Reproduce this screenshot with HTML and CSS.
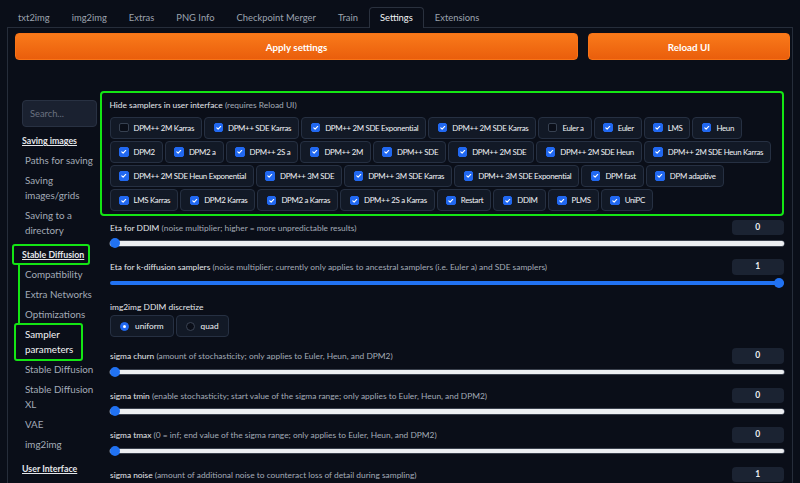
FILE: index.html
```html
<!DOCTYPE html>
<html>
<head>
<meta charset="utf-8">
<link rel="stylesheet" href="styles.css">
</head>
<body>
<div class="app">
  <nav class="tabs">
    <div class="tab">txt2img</div>
    <div class="tab">img2img</div>
    <div class="tab">Extras</div>
    <div class="tab">PNG Info</div>
    <div class="tab">Checkpoint Merger</div>
    <div class="tab">Train</div>
    <div class="tab active">Settings</div>
    <div class="tab">Extensions</div>
  </nav>
  <div class="panel">
    <div class="actions">
      <button class="btn apply">Apply settings</button>
      <button class="btn reload">Reload UI</button>
    </div>
    <div class="settings">
      <aside class="sidebar">
        <div class="search">Search...</div>
        <ul class="nav">
          <li class="head">Saving images</li>
          <li>Paths for saving</li>
          <li>Saving images/grids</li>
          <li>Saving to a directory</li>
          <li class="head">Stable Diffusion</li>
          <li>Compatibility</li>
          <li>Extra Networks</li>
          <li>Optimizations</li>
          <li class="current">Sampler parameters</li>
          <li>Stable Diffusion</li>
          <li>Stable Diffusion XL</li>
          <li>VAE</li>
          <li>img2img</li>
          <li class="head">User Interface</li>
        </ul>
        <div class="mark mark-sd"></div>
        <div class="mark-line"></div>
        <div class="mark mark-sp"></div>
      </aside>
      <main class="main">
        <section class="samplers">
          <div class="title"><span class="lbl">Hide samplers in user interface</span> <span class="info">(requires Reload UI)</span></div>
          <div class="chips">
            <label class="chip"><span class="cb"></span>DPM++ 2M Karras</label>
            <label class="chip"><span class="cb on"><svg viewBox="0 0 10 10"><path d="M2.4 5.1L4.2 6.9L7.6 3.3"/></svg></span>DPM++ SDE Karras</label>
            <label class="chip"><span class="cb on"><svg viewBox="0 0 10 10"><path d="M2.4 5.1L4.2 6.9L7.6 3.3"/></svg></span>DPM++ 2M SDE Exponential</label>
            <label class="chip"><span class="cb on"><svg viewBox="0 0 10 10"><path d="M2.4 5.1L4.2 6.9L7.6 3.3"/></svg></span>DPM++ 2M SDE Karras</label>
            <label class="chip"><span class="cb"></span>Euler a</label>
            <label class="chip"><span class="cb on"><svg viewBox="0 0 10 10"><path d="M2.4 5.1L4.2 6.9L7.6 3.3"/></svg></span>Euler</label>
            <label class="chip"><span class="cb on"><svg viewBox="0 0 10 10"><path d="M2.4 5.1L4.2 6.9L7.6 3.3"/></svg></span>LMS</label>
            <label class="chip"><span class="cb on"><svg viewBox="0 0 10 10"><path d="M2.4 5.1L4.2 6.9L7.6 3.3"/></svg></span>Heun</label>
            <label class="chip"><span class="cb on"><svg viewBox="0 0 10 10"><path d="M2.4 5.1L4.2 6.9L7.6 3.3"/></svg></span>DPM2</label>
            <label class="chip"><span class="cb on"><svg viewBox="0 0 10 10"><path d="M2.4 5.1L4.2 6.9L7.6 3.3"/></svg></span>DPM2 a</label>
            <label class="chip"><span class="cb on"><svg viewBox="0 0 10 10"><path d="M2.4 5.1L4.2 6.9L7.6 3.3"/></svg></span>DPM++ 2S a</label>
            <label class="chip"><span class="cb on"><svg viewBox="0 0 10 10"><path d="M2.4 5.1L4.2 6.9L7.6 3.3"/></svg></span>DPM++ 2M</label>
            <label class="chip"><span class="cb on"><svg viewBox="0 0 10 10"><path d="M2.4 5.1L4.2 6.9L7.6 3.3"/></svg></span>DPM++ SDE</label>
            <label class="chip"><span class="cb on"><svg viewBox="0 0 10 10"><path d="M2.4 5.1L4.2 6.9L7.6 3.3"/></svg></span>DPM++ 2M SDE</label>
            <label class="chip"><span class="cb on"><svg viewBox="0 0 10 10"><path d="M2.4 5.1L4.2 6.9L7.6 3.3"/></svg></span>DPM++ 2M SDE Heun</label>
            <label class="chip"><span class="cb on"><svg viewBox="0 0 10 10"><path d="M2.4 5.1L4.2 6.9L7.6 3.3"/></svg></span>DPM++ 2M SDE Heun Karras</label>
            <label class="chip"><span class="cb on"><svg viewBox="0 0 10 10"><path d="M2.4 5.1L4.2 6.9L7.6 3.3"/></svg></span>DPM++ 2M SDE Heun Exponential</label>
            <label class="chip"><span class="cb on"><svg viewBox="0 0 10 10"><path d="M2.4 5.1L4.2 6.9L7.6 3.3"/></svg></span>DPM++ 3M SDE</label>
            <label class="chip"><span class="cb on"><svg viewBox="0 0 10 10"><path d="M2.4 5.1L4.2 6.9L7.6 3.3"/></svg></span>DPM++ 3M SDE Karras</label>
            <label class="chip"><span class="cb on"><svg viewBox="0 0 10 10"><path d="M2.4 5.1L4.2 6.9L7.6 3.3"/></svg></span>DPM++ 3M SDE Exponential</label>
            <label class="chip"><span class="cb on"><svg viewBox="0 0 10 10"><path d="M2.4 5.1L4.2 6.9L7.6 3.3"/></svg></span>DPM fast</label>
            <label class="chip"><span class="cb on"><svg viewBox="0 0 10 10"><path d="M2.4 5.1L4.2 6.9L7.6 3.3"/></svg></span>DPM adaptive</label>
            <label class="chip"><span class="cb on"><svg viewBox="0 0 10 10"><path d="M2.4 5.1L4.2 6.9L7.6 3.3"/></svg></span>LMS Karras</label>
            <label class="chip"><span class="cb on"><svg viewBox="0 0 10 10"><path d="M2.4 5.1L4.2 6.9L7.6 3.3"/></svg></span>DPM2 Karras</label>
            <label class="chip"><span class="cb on"><svg viewBox="0 0 10 10"><path d="M2.4 5.1L4.2 6.9L7.6 3.3"/></svg></span>DPM2 a Karras</label>
            <label class="chip"><span class="cb on"><svg viewBox="0 0 10 10"><path d="M2.4 5.1L4.2 6.9L7.6 3.3"/></svg></span>DPM++ 2S a Karras</label>
            <label class="chip"><span class="cb on"><svg viewBox="0 0 10 10"><path d="M2.4 5.1L4.2 6.9L7.6 3.3"/></svg></span>Restart</label>
            <label class="chip"><span class="cb on"><svg viewBox="0 0 10 10"><path d="M2.4 5.1L4.2 6.9L7.6 3.3"/></svg></span>DDIM</label>
            <label class="chip"><span class="cb on"><svg viewBox="0 0 10 10"><path d="M2.4 5.1L4.2 6.9L7.6 3.3"/></svg></span>PLMS</label>
            <label class="chip"><span class="cb on"><svg viewBox="0 0 10 10"><path d="M2.4 5.1L4.2 6.9L7.6 3.3"/></svg></span>UniPC</label>
          </div>
        </section>

        <div class="srow">
          <div class="shead"><div class="slabel"><span class="lbl">Eta for DDIM</span> <span class="info">(noise multiplier; higher = more unpredictable results)</span></div><div class="num">0</div></div>
          <input class="range" type="range" min="0" max="1" step="0.01" value="0">
        </div>
        <div class="srow">
          <div class="shead"><div class="slabel"><span class="lbl">Eta for k-diffusion samplers</span> <span class="info">(noise multiplier; currently only applies to ancestral samplers (i.e. Euler a) and SDE samplers)</span></div><div class="num">1</div></div>
          <input class="range filled" type="range" min="0" max="1" step="0.01" value="1">
        </div>
        <div class="radio-block">
          <div class="slabel"><span class="lbl">img2img DDIM discretize</span></div>
          <div class="radios">
            <label class="chip"><span class="rd on"></span>uniform</label>
            <label class="chip"><span class="rd"></span>quad</label>
          </div>
        </div>
        <div class="srow">
          <div class="shead"><div class="slabel"><span class="lbl">sigma churn</span> <span class="info">(amount of stochasticity; only applies to Euler, Heun, and DPM2)</span></div><div class="num">0</div></div>
          <input class="range" type="range" min="0" max="100" step="0.01" value="0">
        </div>
        <div class="srow">
          <div class="shead"><div class="slabel"><span class="lbl">sigma tmin</span> <span class="info">(enable stochasticity; start value of the sigma range; only applies to Euler, Heun, and DPM2)</span></div><div class="num">0</div></div>
          <input class="range" type="range" min="0" max="10" step="0.01" value="0">
        </div>
        <div class="srow">
          <div class="shead"><div class="slabel"><span class="lbl">sigma tmax</span> <span class="info">(0 = inf; end value of the sigma range; only applies to Euler, Heun, and DPM2)</span></div><div class="num">0</div></div>
          <input class="range" type="range" min="0" max="999" step="0.01" value="0">
        </div>
        <div class="srow">
          <div class="shead"><div class="slabel"><span class="lbl">sigma noise</span> <span class="info">(amount of additional noise to counteract loss of detail during sampling)</span></div><div class="num">1</div></div>
        </div>
      </main>
    </div>
  </div>
</div>
</body>
</html>
```

FILE: styles.css
```css
html, body {
  margin: 0;
  padding: 0;
  height: 483px;
  overflow: hidden;
  background: #0a0e18;
}
body {
  font-family: Lato, "Noto Sans", sans-serif;
  color: #e5e7eb;
}
.app {
  padding: 0 7px;
}
.tabs {
  display: flex;
  margin-top: 7px;
  height: 20px;
  position: relative;
  z-index: 1;
}
.tab {
  padding: 0 10px;
  height: 20px;
  line-height: 20px;
  font-size: 9.4px;
  color: #9ca3af;
  border: 1px solid transparent;
  border-bottom: none;
  border-radius: 4px 4px 0 0;
  box-sizing: border-box;
  white-space: nowrap;
}
.tab.active {
  color: #f3f4f6;
  border-color: #2a313e;
  background: #0a0e18;
  height: 21px;
}
.panel {
  border: 1px solid #262d3a;
  border-bottom: none;
  padding: 5px 2px 0 7px;
}
.actions {
  display: flex;
  gap: 10px;
}
.btn {
  height: 27px;
  border: 1px solid #f97316;
  border-radius: 4px;
  background: linear-gradient(180deg, #f97a1a 0%, #ea5e0c 100%);
  color: #fff;
  font-family: Lato, "Noto Sans", sans-serif;
  font-weight: 700;
  font-size: 9.8px;
  padding: 0;
}
.apply { flex: 1; }
.reload { width: 202px; }

.settings {
  display: flex;
  margin-top: 31px;
}
.sidebar {
  position: relative;
  width: 85px;
  flex: none;
  padding-left: 7px;
  box-sizing: border-box;
}
.search {
  margin-top: 9px;
  height: 27px;
  box-sizing: border-box;
  width: 75px;
  border: 1px solid #283142;
  background: #1a2130;
  border-radius: 4px;
  font-size: 9.3px;
  color: #6b7280;
  line-height: 25px;
  padding-left: 7px;
}
.nav {
  list-style: none;
  margin: 0;
  padding: 0;
}
.nav li {
  font-size: 9.8px;
  line-height: 15px;
  padding: 2px 2px 3px 3px;
  color: #a3abb7;
}
.nav li.head {
  margin-top: 4px;
  padding-left: 0;
  font-weight: 700;
  font-size: 8.8px;
  color: #e5e7eb;
  text-decoration: underline;
}
.nav li.current {
  color: #f3f4f6;
}
.mark {
  position: absolute;
  box-sizing: border-box;
  border: 2.5px solid #14e614;
  border-radius: 3px;
}
.mark-sd {
  left: -3px;
  top: 153px;
  width: 78px;
  height: 21px;
}
.mark-sp {
  left: -1px;
  top: 231.5px;
  width: 69px;
  height: 38px;
}
.mark-line {
  position: absolute;
  left: 2.5px;
  top: 173px;
  width: 2.6px;
  height: 59px;
  background: #14e614;
}

.main {
  flex: 1;
  margin-right: 6px;
  min-width: 0;
}
.samplers {
  border: 2.5px solid #14e614;
  border-radius: 4px;
  padding: 6px 1px 2.5px 7.5px;
}
.title, .slabel {
  font-size: 8.4px;
  line-height: 12px;
  white-space: nowrap;
}
.lbl { color: #e5e7eb; }
.info { color: #a3abb7; }
.chips {
  display: flex;
  flex-wrap: wrap;
  gap: 2.3px 2px;
  margin-top: 5.5px;
}
.chip {
  display: inline-flex;
  align-items: center;
  height: 22px;
  box-sizing: border-box;
  padding: 0 7px 0 8.5px;
  background: #121926;
  border: 1px solid #263042;
  border-radius: 4px;
  font-size: 7.9px;
  letter-spacing: -0.32px;
  color: #f1f3f6;
  white-space: nowrap;
}
.cb {
  width: 9.5px;
  height: 9.5px;
  box-sizing: border-box;
  border-radius: 2px;
  border: 1px solid #374151;
  background: #0a0e18;
  margin-right: 5px;
  display: inline-flex;
  flex: none;
}
.cb.on {
  background: #2168f0;
  border-color: #2168f0;
}
.cb svg {
  width: 100%;
  height: 100%;
}
.cb svg path {
  fill: none;
  stroke: #fff;
  stroke-width: 1.5;
  stroke-linecap: round;
  stroke-linejoin: round;
}

.srow {
  padding-left: 10px;
  margin-bottom: 10px;
}
.samplers + .srow {
  margin-top: 4px;
}
.shead {
  display: flex;
  align-items: center;
  height: 15.5px;
}
.shead .slabel {
  flex: 1;
  overflow: hidden;
}
.num {
  width: 52.5px;
  height: 15.5px;
  box-sizing: border-box;
  border-radius: 4px;
  background: #1b2332;
  font-size: 8.5px;
  font-weight: 700;
  color: #eef0f3;
  text-align: center;
  line-height: 15.5px;
}
.range {
  -webkit-appearance: none;
  appearance: none;
  display: block;
  width: 100%;
  height: 12px;
  margin: 2px 0 0;
  padding: 0;
  background: transparent;
}
.range::-webkit-slider-runnable-track {
  height: 4.5px;
  border-radius: 3px;
  background: #eceef1;
  box-shadow: 0 0 0 0.6px #6b7280;
}
.range.filled::-webkit-slider-runnable-track {
  background: #2172f2;
  box-shadow: none;
}
.range::-webkit-slider-thumb {
  -webkit-appearance: none;
  appearance: none;
  width: 10px;
  height: 10px;
  border-radius: 50%;
  background: #2172f2;
  border: none;
  margin-top: -2.75px;
}
.radio-block {
  padding: 2.5px 0 0 10px;
  margin-bottom: 11.5px;
}
.radios {
  display: flex;
  gap: 2px;
  margin-top: 2px;
}
.radios .chip {
  height: 21.5px;
  padding: 0 9px 0 9px;
  letter-spacing: 0;
  font-size: 8.3px;
}
.rd {
  width: 9px;
  height: 9px;
  box-sizing: border-box;
  border-radius: 50%;
  border: 1px solid #3b4454;
  background: #0a0e18;
  margin-right: 6px;
  position: relative;
  flex: none;
}
.rd.on {
  background: #2168f0;
  border-color: #2168f0;
}
.rd.on::after {
  content: "";
  position: absolute;
  left: 2px;
  top: 2px;
  width: 3px;
  height: 3px;
  border-radius: 50%;
  background: #fff;
}
```
